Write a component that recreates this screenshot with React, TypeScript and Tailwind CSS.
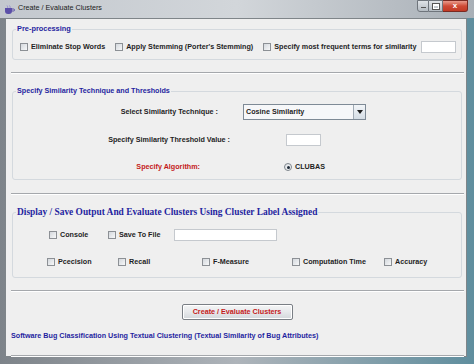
import React from 'react';

function Check({ label, className = '' }: { label: string; className?: string }) {
    return (
        <div className={`flex items-center ${className}`}>
            <span className="inline-block w-[8px] h-[8px] border border-[#8c9095] bg-gradient-to-br from-[#d4d8dd] to-[#f7f8f9] shrink-0" />
            <span className="ml-[3px] whitespace-nowrap">{label}</span>
        </div>
    );
}

function Field({ className = '' }: { className?: string }) {
    return <div className={`h-[12px] bg-white border border-[#c5c9ce] ${className}`} />;
}

function Separator({ className = '' }: { className?: string }) {
    return <div className={`mx-[5px] w-[453px] border-t border-[#a5a8ac] border-b border-b-white ${className}`} />;
}

export default function App() {
    return (
        <div className="w-[474px] h-[364px] flex flex-col bg-gradient-to-r from-[#7d8389] via-[#aeb4ba] to-[#5f8e9e] font-['Liberation_Sans',Arial,sans-serif] text-[#1e1e1e] overflow-hidden">
            {/* Title bar */}
            <div className="h-[18px] flex items-start bg-gradient-to-r from-[#c3c8ce] via-[#d2d6da] to-[#a9b0b7]">
                <svg className="ml-[4px] mt-[5px]" width="11" height="9" viewBox="0 0 11 9">
                    <path d="M1 3h7v3a3 3 0 0 1-3 3H4a3 3 0 0 1-3-3z" fill="#5b4fa8" />
                    <path d="M8 4h1.5a1 1 0 0 1 0 2H8" fill="none" stroke="#5b4fa8" strokeWidth="1" />
                    <path d="M3 0.5c1 1 0 1.5 1 2.5M5.5 0.5c1 1 0 1.5 1 2.5" stroke="#8a7fd0" strokeWidth="0.8" fill="none" />
                </svg>
                <span className="ml-[3px] mt-[3px] text-[7.2px] leading-[10px] text-[#1a1a1a]">Create / Evaluate Clusters</span>
                <div className="flex-1" />
                <div className="flex mr-[6px]">
                    <div className="w-[12px] h-[12px] border border-[#6f757c] rounded-bl-[3px] bg-gradient-to-b from-[#dfe3e7] to-[#b5bcc3] flex items-end justify-center pb-[3px]">
                        <span className="block w-[5px] h-[1.5px] bg-white border-t border-[#555]" />
                    </div>
                    <div className="w-[14px] h-[12px] border-y border-r border-[#6f757c] bg-gradient-to-b from-[#dfe3e7] to-[#b5bcc3] flex items-center justify-center">
                        <span className="block w-[6px] h-[5px] border border-white border-t-2 outline outline-[0.5px] outline-[#555]" />
                    </div>
                    <div className="w-[25px] h-[12px] border-y border-r border-[#7a2a22] rounded-br-[3px] bg-gradient-to-b from-[#e89a8c] via-[#cf4a36] to-[#c23a25] flex items-center justify-center text-white text-[8px] font-bold leading-none">
                        x
                    </div>
                </div>
            </div>

            {/* Content */}
            <div className="ml-[5px] mr-[7px] mb-[7px] h-[339px] bg-[#efefef] border border-[#7f8589] flex flex-col text-[7.2px] font-bold leading-[10px]">
                {/* Pre-processing */}
                <fieldset className="mt-[5px] ml-[6px] w-[450px] border border-[#d4d9de] rounded-[3px] pb-[6px]">
                    <legend className="ml-[3px] px-[1px] text-[#1f1fa0] text-[7.4px] leading-[10px]">Pre-processing</legend>
                    <div className="mt-[7px] flex items-center pl-[7px] h-[12px]">
                        <Check label="Eliminate Stop Words" />
                        <Check label="Apply Stemming (Porter's Stemming)" className="ml-[10px]" />
                        <Check label="Specify most frequent terms for similarity" className="ml-[10px]" />
                        <Field className="ml-auto mr-[5px] w-[35px]" />
                    </div>
                </fieldset>

                <Separator className="mt-[12px]" />

                {/* Similarity */}
                <fieldset className="mt-[12px] ml-[6px] w-[450px] border border-[#d4d9de] rounded-[3px] pb-[6px]">
                    <legend className="ml-[3px] px-[1px] text-[#1f1fa0] text-[7.2px] leading-[10px]">Specify Similarity Technique and Thresholds</legend>
                    <div className="mt-[8px] flex items-center h-[16px]">
                        <div className="w-[205px] text-right">Select Similarity Technique :</div>
                        <div className="ml-[25px] w-[123px] h-[16px] flex border border-[#7e8a96] bg-[#f6f7f9]">
                            <span className="flex-1 pl-[2px] leading-[14px]">Cosine Similarity</span>
                            <span className="w-[12px] border-l border-[#a0aab4] bg-gradient-to-b from-[#f2f5f8] to-[#d5dde5] flex items-center justify-center">
                                <svg width="6" height="4" viewBox="0 0 6 4"><path d="M0 0h6L3 4z" fill="#1e1e1e" /></svg>
                            </span>
                        </div>
                    </div>
                    <div className="mt-[14px] flex items-center h-[12px]">
                        <div className="w-[217px] text-right">Specify Similarity Threshold Value :</div>
                        <Field className="ml-[56px] w-[35px]" />
                    </div>
                    <div className="mt-[15px] flex items-center h-[12px]">
                        <div className="w-[187px] text-right text-[#c41a1a]">Specify Algorithm:</div>
                        <div className="ml-[84px] flex items-center">
                            <span className="w-[8px] h-[8px] rounded-full border border-[#7d848b] bg-gradient-to-br from-[#dfe2e6] to-[#f7f8f9] flex items-center justify-center">
                                <span className="w-[3px] h-[3px] rounded-full bg-[#1e2a38]" />
                            </span>
                            <span className="ml-[3px]">CLUBAS</span>
                        </div>
                    </div>
                </fieldset>

                <Separator className="mt-[13px]" />

                {/* Output */}
                <fieldset className="mt-[12px] ml-[6px] w-[450px] border border-[#d4d9de] rounded-[3px] pb-[9px]">
                    <legend className="ml-[3px] px-[1px] text-[#1f1fa0] font-['Liberation_Serif',serif] text-[9.4px] leading-[11px]">Display / Save Output And Evaluate Clusters Using Cluster Label Assigned</legend>
                    <div className="mt-[11px] flex items-center h-[12px] pl-[36px]">
                        <Check label="Console" className="w-[59px]" />
                        <Check label="Save To File" className="w-[66px]" />
                        <Field className="w-[103px]" />
                    </div>
                    <div className="mt-[15px] flex items-center h-[12px] pl-[34px]">
                        <Check label="Pcecision" className="w-[71px]" />
                        <Check label="Recall" className="w-[84px]" />
                        <Check label="F-Measure" className="w-[90px]" />
                        <Check label="Computation Time" className="w-[92px]" />
                        <Check label="Accuracy" />
                    </div>
                </fieldset>

                <Separator className="mt-[12px]" />

                <div className="mt-[12px] flex justify-center">
                    <button className="ml-[2px] w-[111px] h-[16px] border border-[#7a7f85] rounded-[2px] bg-gradient-to-b from-[#f4f5f6] via-[#e7e9eb] to-[#d3d7db] shadow-[inset_0_0_0_1px_#ffffff] text-[#c41a1a] text-[7.2px] font-bold">
                        Create / Evaluate Clusters
                    </button>
                </div>

                <div className="mt-[11px] ml-[5px] text-[#1f1fa0] whitespace-nowrap">
                    Software Bug Classification Using Textual Clustering (Textual Similarity of Bug Attributes)
                </div>

                <Separator className="mt-[14px]" />
            </div>
        </div>
    );
}
